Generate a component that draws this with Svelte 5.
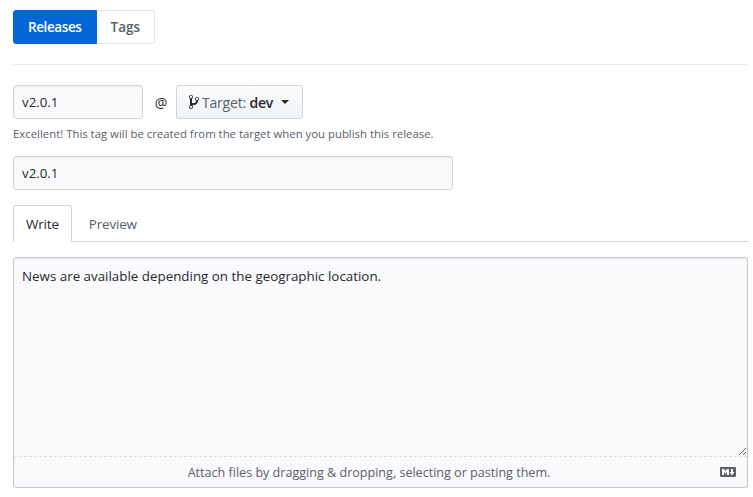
<script>
  let tag = "v2.0.1";
  let title = "v2.0.1";
  let body = "News are available depending on the geographic location.";
</script>

<div class="page">
  <nav class="subnav">
    <span class="subnav-item selected">Releases</span>
    <span class="subnav-item">Tags</span>
  </nav>

  <div class="tag-row">
    <input class="field tag" type="text" bind:value={tag} />
    <span class="at">@</span>
    <button class="target" type="button">
      <svg width="10" height="16" viewBox="0 0 10 16" aria-hidden="true">
        <path fill="#24292e" fill-rule="evenodd" d="M10 5c0-1.11-.89-2-2-2a1.993 1.993 0 0 0-1 3.72v.3c-.02.52-.23.98-.63 1.38-.4.4-.86.61-1.38.63-.83.02-1.48.16-2 .45V4.72a1.993 1.993 0 0 0-1-3.72C.88 1 0 1.89 0 3a2 2 0 0 0 1 1.72v6.56c-.59.35-1 .99-1 1.72 0 1.11.89 2 2 2 1.11 0 2-.89 2-2 0-.53-.2-1-.53-1.36.09-.06.48-.41.59-.47.25-.11.56-.17.94-.17 1.05-.05 1.95-.45 2.75-1.25S8.95 7.77 9 6.73h-.02C9.59 6.37 10 5.73 10 5zM2 1.8c.66 0 1.2.55 1.2 1.2 0 .65-.55 1.2-1.2 1.2C1.35 4.2.8 3.65.8 3c0-.65.55-1.2 1.2-1.2zm0 12.41c-.66 0-1.2-.55-1.2-1.2 0-.65.55-1.2 1.2-1.2.65 0 1.2.55 1.2 1.2 0 .65-.55 1.2-1.2 1.2zm6-8c-.66 0-1.2-.55-1.2-1.2 0-.65.55-1.2 1.2-1.2.65 0 1.2.55 1.2 1.2 0 .65-.55 1.2-1.2 1.2z"/>
      </svg>
      <span class="target-label">Target: <b>dev</b></span>
      <span class="caret"></span>
    </button>
  </div>
  <p class="note">Excellent! This tag will be created from the target when you publish this release.</p>

  <input class="field title" type="text" bind:value={title} />

  <div class="tabs">
    <span class="tab selected">Write</span>
    <span class="tab">Preview</span>
  </div>

  <div class="editor">
    <textarea bind:value={body}></textarea>
    <div class="attach">
      <span>Attach files by dragging &amp; dropping, selecting or pasting them.</span>
      <svg class="md" width="16" height="10" viewBox="0 0 16 10" aria-hidden="true">
        <path fill="#586069" fill-rule="evenodd" d="M14.85 0H1.15C.52 0 0 .52 0 1.15v7.69C0 9.48.52 10 1.15 10h13.69c.64 0 1.15-.52 1.15-1.15V1.15C16 .52 15.48 0 14.85 0zM9 8H7V5L5.5 6.92 4 5v3H2V2h2l1.5 2L7 2h2v6zm2.99.5L9.5 5H11V2h2v3h1.5l-2.51 3.5z"/>
      </svg>
    </div>
  </div>
</div>

<style>
  :global(body) {
    margin: 0;
    background: #fff;
    color: #24292e;
    font-family: "Open Sans", "Noto Sans", "Liberation Sans", sans-serif;
    font-size: 14px;
  }

  .page {
    padding: 10px 5px 0 13px;
    display: flex;
    flex-direction: column;
  }

  .subnav {
    display: flex;
    height: 34px;
    padding-bottom: 20px;
    margin-bottom: 20px;
    border-bottom: 1px solid #eaecef;
  }

  .subnav-item {
    display: flex;
    align-items: center;
    padding: 0 14px;
    font-weight: 600;
    font-size: 13.5px;
    letter-spacing: 0;
    color: #586069;
    border: 1px solid #e1e4e8;
    border-left: 0;
    border-radius: 0 3px 3px 0;
  }

  .subnav-item.selected {
    padding: 0 14px;
    letter-spacing: -0.4px;
    color: #fff;
    background: #0366d6;
    border: 1px solid #0366d6;
    border-radius: 3px 0 0 3px;
  }

  .tag-row {
    display: flex;
    align-items: center;
    height: 34px;
  }

  .field {
    box-sizing: border-box;
    height: 34px;
    padding: 0 8px;
    font: inherit;
    font-size: 13.3px;
    color: #24292e;
    background: #fafafc;
    border: 1px solid #d1d5da;
    border-radius: 3px;
    box-shadow: inset 0 1px 2px rgba(27, 31, 35, 0.075);
    outline: none;
  }

  .tag { width: 130px; }
  .title { width: 440px; }

  .at {
    width: 33px;
    text-align: center;
    font-size: 14px;
    padding-left: 3px;
    box-sizing: border-box;
    color: #24292e;
  }

  .target {
    display: flex;
    align-items: center;
    box-sizing: border-box;
    width: 127px;
    height: 34px;
    padding: 0 0 0 12px;
    font: inherit;
    font-size: 14px;
    color: #586069;
    background: linear-gradient(#fafbfc, #eff3f6);
    border: 1px solid #d1d5da;
    border-radius: 3px;
  }

  .target svg { margin-right: 3px; }
  .target-label { letter-spacing: -0.2px; white-space: nowrap; }
  .target b { font-weight: 600; color: #24292e; }

  .caret {
    margin-left: 8px;
    width: 0;
    height: 0;
    border: 4px solid transparent;
    border-top-color: #24292e;
    border-bottom-width: 0;
  }

  .note {
    margin: 8px 0 15px;
    height: 14px;
    line-height: 14px;
    font-size: 11.37px;
    color: #586069;
    white-space: nowrap;
  }

  .tabs {
    display: flex;
    margin-top: 15px;
    height: 37px;
    box-sizing: border-box;
    border-bottom: 1px solid #d1d5da;
  }

  .tab {
    display: flex;
    align-items: center;
    height: 37px;
    padding: 0 17px;
    font-size: 13.5px;
    letter-spacing: -0.2px;
    color: #586069;
  }

  .tab.selected {
    box-sizing: border-box;
    height: 37px;
    padding: 0 12px 1px;
    color: #24292e;
    background: #fff;
    border: 1px solid #d1d5da;
    border-bottom: 0;
    border-radius: 3px 3px 0 0;
  }

  .editor {
    box-sizing: border-box;
    display: flex;
    flex-direction: column;
    margin-top: 15px;
    width: 735px;
    height: 231px;
    background: #fafafd;
    border: 1px solid #c3c8cf;
    border-radius: 3px;
    box-shadow: inset 0 1px 2px rgba(27, 31, 35, 0.075);
  }

  textarea {
    flex: 1;
    display: block;
    box-sizing: border-box;
    width: 100%;
    padding: 8px;
    font: inherit;
    font-size: 13.37px;
    line-height: 20px;
    color: #24292e;
    background: transparent;
    border: 0;
    border-bottom: 1px dashed #dfe2e5;
    outline: none;
  }

  .attach {
    position: relative;
    box-sizing: border-box;
    height: 30px;
    padding-right: 23px;
    display: flex;
    align-items: center;
    justify-content: center;
    font-size: 12.57px;
    color: #586069;
  }

  .md {
    position: absolute;
    right: 11px;
    top: 10px;
  }
</style>
